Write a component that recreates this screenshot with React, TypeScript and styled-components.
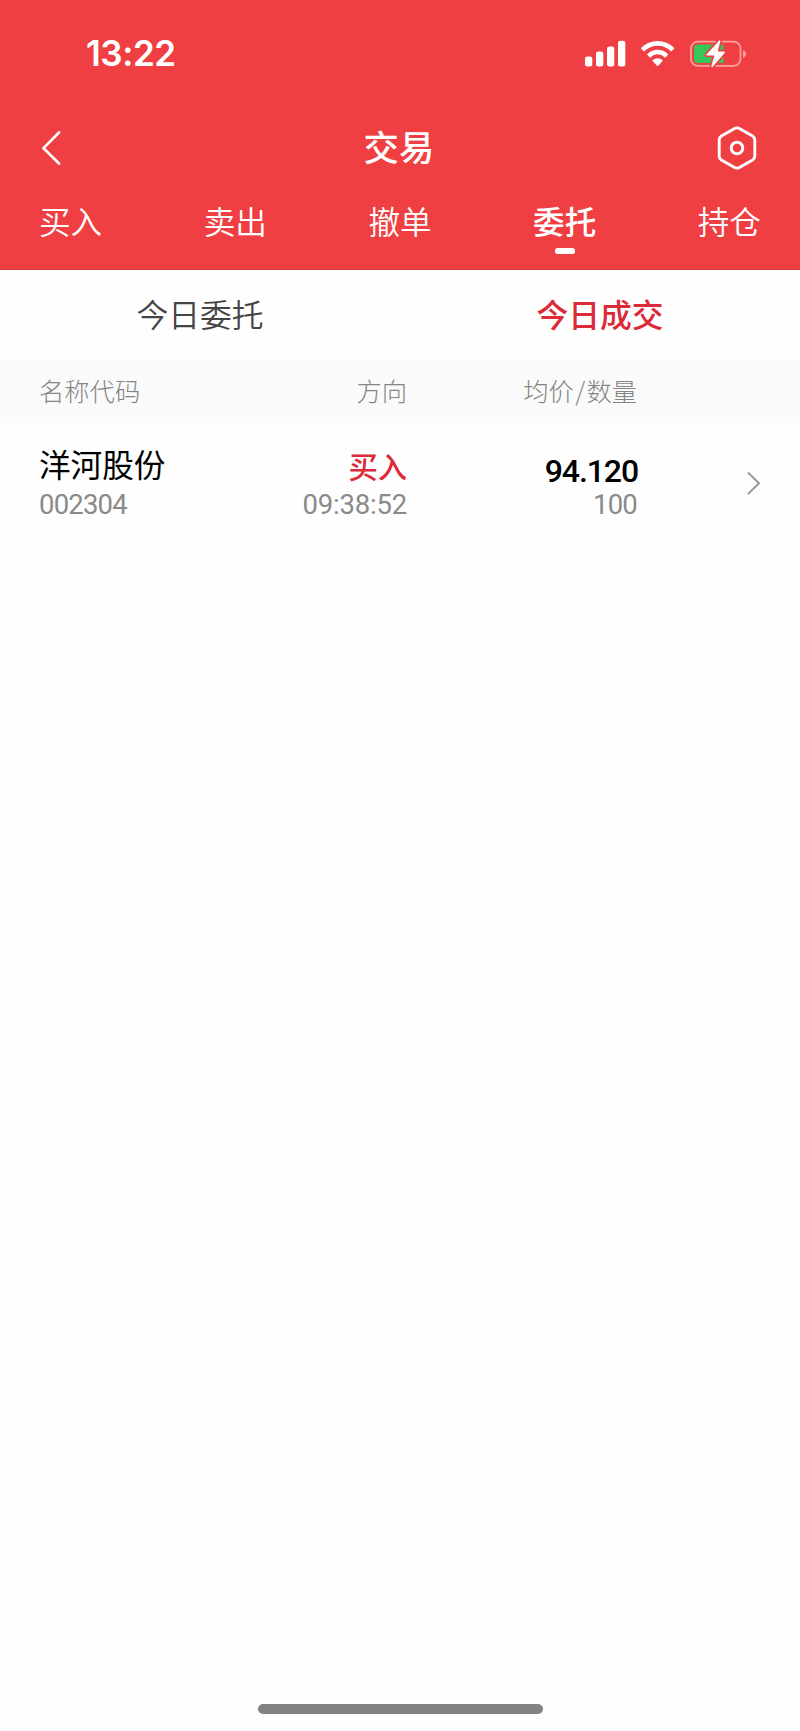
import React from 'react';
import styled, { createGlobalStyle } from 'styled-components';

const GlobalStyle = createGlobalStyle`
  *, *::before, *::after { box-sizing: border-box; }
  body {
    margin: 0;
    background: #fefefe;
    font-family: 'Noto Sans CJK SC', sans-serif;
  }
`;

const Screen = styled.div`
  width: 800px;
  height: 1731px;
  display: flex;
  flex-direction: column;
  background: #fefefe;
  overflow: hidden;
`;

const Header = styled.header`
  height: 270px;
  background: #f03f42;
  border-bottom: 1px solid #d8393c;
  color: #fff;
`;

const StatusBar = styled.div`
  height: 107px;
  padding: 0 54px 0 86px;
  display: flex;
  align-items: center;
  justify-content: space-between;
`;

const Clock = styled.span`
  font: 600 35px/40px Inter, sans-serif;
  letter-spacing: -0.45px;
  padding-bottom: 2px;
`;

const StatusIcons = styled.svg`
  display: block;
  width: 162px;
  height: 30px;
`;

const NavBar = styled.div`
  height: 81px;
  padding: 0 42px 0 40px;
  display: grid;
  grid-template-columns: 1fr auto 1fr;
  align-items: center;
`;

const BackIcon = styled.svg`
  width: 22px;
  height: 34px;
`;

const Title = styled.h1`
  margin: 0;
  font-size: 35.4px;
  line-height: 50px;
  padding-bottom: 3px;
  font-weight: 500;
`;

const SettingsIcon = styled.svg`
  width: 42px;
  height: 44px;
  justify-self: end;
`;

const TabBar = styled.nav`
  height: 81px;
  padding: 7px 39px 0;
  display: flex;
  justify-content: space-between;
`;

const Tab = styled.div<{ $active?: boolean }>`
  display: flex;
  flex-direction: column;
  align-items: center;
  font-size: 31.6px;
  line-height: 50px;
  font-weight: ${(p) => (p.$active ? 500 : 350)};
  &::after {
    content: '';
    width: 20px;
    height: 6px;
    margin-top: 3px;
    border-radius: 2.5px;
    background: ${(p) => (p.$active ? '#fff' : 'transparent')};
  }
`;

const SubTabs = styled.div`
  height: 88.5px;
  display: grid;
  grid-template-columns: 1fr 1fr;
`;

const SubTab = styled.div<{ $active?: boolean }>`
  text-align: center;
  font-size: 31.8px;
  line-height: 86px;
  font-weight: ${(p) => (p.$active ? 500 : 350)};
  color: ${(p) => (p.$active ? '#db2b38' : '#444')};
`;

const columns = `
  display: grid;
  grid-template-columns: 168px 200px 230px 1fr;
  padding: 0 39px;
`;

const TableHead = styled.div`
  ${columns}
  height: 64px;
  background: #fafafa;
  color: #858585;
  font-size: 25.3px;
  font-weight: 300;
  line-height: 62px;
`;

const HeadCell = styled.span<{ $right?: boolean }>`
  text-align: ${(p) => (p.$right ? 'right' : 'left')};
`;

const Slash = styled.span`
  padding: 0 1.3px;
`;

const Row = styled.div`
  ${columns}
  height: 120px;
`;

const Cell = styled.div<{ $right?: boolean }>`
  display: flex;
  flex-direction: column;
  padding-top: 20px;
  white-space: nowrap;
  align-items: ${(p) => (p.$right ? 'flex-end' : 'flex-start')};
`;

const Name = styled.span`
  font-size: 31.6px;
  line-height: 41px;
  height: 46px;
  font-weight: 400;
  color: #000;
`;

const Side = styled.span`
  font-size: 29.3px;
  line-height: 44px;
  height: 46px;
  font-weight: 500;
  color: #db2b38;
`;

const Price = styled.span`
  font: 500 32px/46px Roboto, sans-serif;
  height: 46px;
  padding-top: 5px;
  letter-spacing: -1.1px;
  margin-right: -1px;
  color: #000;
`;

const Sub = styled.span<{ $spacing?: number }>`
  font: 400 27.5px/32px Roboto, sans-serif;
  letter-spacing: ${(p) => p.$spacing ?? -0.8}px;
  color: #8a8a8a;
`;

const Chevron = styled.svg`
  width: 15px;
  height: 26px;
  margin-top: 47px;
  justify-self: end;
`;

const HomeIndicator = styled.div`
  width: 285px;
  height: 10px;
  margin: auto auto 17px;
  border-radius: 5px;
  background: #828282;
`;

const tabs = ['买入', '卖出', '撤单', '委托', '持仓'];

export default function App() {
  return (
    <Screen>
      <GlobalStyle />
      <Header>
        <StatusBar>
          <Clock>13:22</Clock>
          <StatusIcons viewBox="0 0 162 30" fill="none">
            <g fill="#fff">
              <rect x="1" y="17.5" width="7.3" height="10" rx="2.3" />
              <rect x="12" y="12.5" width="7.3" height="15" rx="2.3" />
              <rect x="23" y="7.5" width="7.3" height="20" rx="2.3" />
              <rect x="34" y="1.7" width="7.3" height="25.8" rx="2.3" />
            </g>
            <path d="M58.4 10.8C67.3 2.2 80 2.2 88.9 10.8" stroke="#fff" strokeWidth="4.6" />
            <path d="M64.5 17C70.2 11.8 77 11.8 82.8 17" stroke="#fff" strokeWidth="4.5" />
            <path d="M68.2 21.4Q73.6 17.2 79 21.4L74.5 26.6Q73.6 27.5 72.7 26.6Z" fill="#fff" />
            <rect x="107" y="2.6" width="49.5" height="24.3" rx="7" stroke="#f9a0a1" strokeWidth="1.7" />
            <path d="M159 11.2Q162 12.2 162 15T159 18.8Z" fill="#f9a0a1" />
            <path d="M114 5.6H139.5V23.9H114Q110 23.9 110 19.9V9.6Q110 5.6 114 5.6Z" fill="#35c759" />
            <path d="M135.3 1.4L122.4 15.4Q121.8 16.5 123 16.5H130.4L127.3 27.3Q127.6 28.8 128.7 27.8L140.8 13.7Q141.3 12.5 140.2 12.5H133.6L136.5 2Q136.3 .8 135.3 1.4Z" fill="#fff" stroke="#f03f42" strokeWidth="3.4" paintOrder="stroke" />
          </StatusIcons>
        </StatusBar>
        <NavBar>
          <BackIcon viewBox="0 0 22 34" fill="none">
            <path d="M19 1.5L3.5 17.2L19 32.5" stroke="#fff" strokeWidth="2.6" strokeLinecap="round" strokeLinejoin="round" />
          </BackIcon>
          <Title>交易</Title>
          <SettingsIcon viewBox="0 0 42 44" fill="none" stroke="#fff">
            <path d="M18.6 2.5Q21 1.2 23.4 2.5L36.6 10Q38.8 11.4 38.8 14V30Q38.8 32.6 36.6 34L23.4 41.5Q21 42.8 18.6 41.5L5.4 34Q3.2 32.6 3.2 30V14Q3.2 11.4 5.4 10Z" strokeWidth="2.9" />
            <circle cx="21" cy="22" r="5.8" strokeWidth="2.9" />
          </SettingsIcon>
        </NavBar>
        <TabBar>
          {tabs.map((label) => (
            <Tab key={label} $active={label === '委托'}>
              {label}
            </Tab>
          ))}
        </TabBar>
      </Header>
      <SubTabs>
        <SubTab>今日委托</SubTab>
        <SubTab $active>今日成交</SubTab>
      </SubTabs>
      <TableHead>
        <HeadCell>名称代码</HeadCell>
        <HeadCell $right>方向</HeadCell>
        <HeadCell $right>
          均价<Slash>/</Slash>数量
        </HeadCell>
      </TableHead>
      <Row>
        <Cell>
          <Name>洋河股份</Name>
          <Sub>002304</Sub>
        </Cell>
        <Cell $right>
          <Side>买入</Side>
          <Sub $spacing={-0.2}>09:38:52</Sub>
        </Cell>
        <Cell $right>
          <Price>94.120</Price>
          <Sub>100</Sub>
        </Cell>
        <Chevron viewBox="0 0 15 26" fill="none">
          <path d="M2 2.5L13 13.2L2 24" stroke="#999" strokeWidth="1.9" />
        </Chevron>
      </Row>
      <HomeIndicator />
    </Screen>
  );
}
